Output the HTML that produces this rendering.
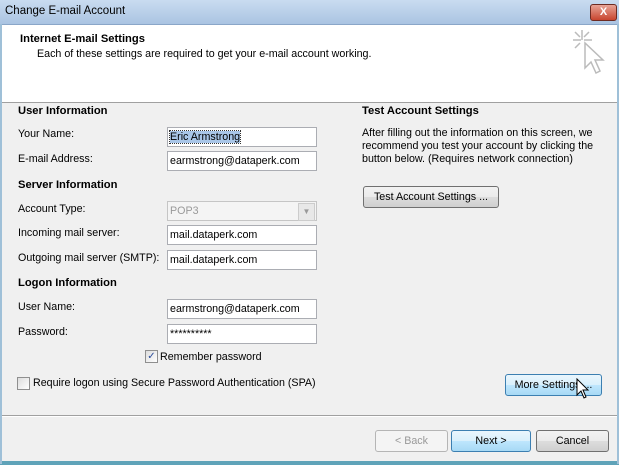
<html><head><style>
body{margin:0;width:619px;height:465px;position:relative;background:#f0f0f0;font-family:"Liberation Sans",sans-serif;font-size:10.7px;color:#000;overflow:hidden}
div,span{position:absolute;white-space:nowrap}
.b{font-weight:bold;font-size:11.2px}
.in{left:167px;width:146px;height:18px;border:1px solid #abadb3;background:#fff;line-height:18px;padding-left:2px;box-sizing:content-box}
.btn{height:20px;border:1px solid #707070;border-radius:3px;background:linear-gradient(#f2f2f2,#ebebeb 50%,#dddddd 51%,#cfcfcf);text-align:center;line-height:20px}
.cb{width:11px;height:11px;border:1px solid #8f8f8f;background:linear-gradient(135deg,#ddd,#fff)}
</style></head><body>
<div style="left:0;top:0;width:619px;height:24px;background:linear-gradient(#c9dcf0,#aac4e2);border-bottom:1px solid #8aa6c8"></div>
<div style="left:5px;top:5px;font-size:11.5px">Change E-mail Account</div>
<div style="left:590px;top:4px;width:25px;height:15px;border:1px solid #6d2b22;border-radius:3px;background:linear-gradient(#e8a496,#c8452f);color:#fff;font-weight:bold;text-align:center;line-height:15px;font-size:11px">X</div>
<div style="left:0;top:25px;width:619px;height:77px;background:#fff;border-bottom:1px solid #a0a0a0"></div>
<div class="b" style="left:20px;top:33px">Internet E-mail Settings</div>
<div style="left:37px;top:48px">Each of these settings are required to get your e-mail account working.</div>
<svg style="position:absolute;left:570px;top:26px" width="40" height="52"><g stroke="#bbb" stroke-width="1.5" fill="none"><path d="M12 4v10M3 14h8M14 14h8M5 6l5 5M19 6l-5 5M5 22l5-5"/><path d="M15 17l0 25 6-6 5 11 4-2-5-11 8 0z" fill="#fff"/></g></svg>
<div class="b" style="left:18px;top:105px">User Information</div>
<div style="left:18px;top:128px">Your Name:</div>
<div class="in" style="top:127px"><span style="position:static;background:#a9c6e8;outline:1px dotted #333">Eric Armstrong</span></div>
<div style="left:18px;top:153px">E-mail Address:</div>
<div class="in" style="top:151px">earmstrong@dataperk.com</div>
<div class="b" style="left:18px;top:179px">Server Information</div>
<div style="left:18px;top:203px">Account Type:</div>
<div class="in" style="top:201px;background:#f4f4f4;color:#999;border-color:#c5c5c5">POP3<span style="right:1px;top:1px;width:15px;height:16px;background:#e8e8e8;border:1px solid #ccc;color:#999;text-align:center;line-height:16px;font-size:8px">▼</span></div>
<div style="left:18px;top:227px">Incoming mail server:</div>
<div class="in" style="top:225px">mail.dataperk.com</div>
<div style="left:18px;top:252px">Outgoing mail server (SMTP):</div>
<div class="in" style="top:250px">mail.dataperk.com</div>
<div class="b" style="left:18px;top:277px">Logon Information</div>
<div style="left:18px;top:301px">User Name:</div>
<div class="in" style="top:299px">earmstrong@dataperk.com</div>
<div style="left:18px;top:326px">Password:</div>
<div class="in" style="top:324px">**********</div>
<div class="cb" style="left:145px;top:350px;color:#2a4b9b;font-size:10px;line-height:11px;text-align:center">✓</div>
<div style="left:160px;top:351px">Remember password</div>
<div class="cb" style="left:17px;top:377px"></div>
<div style="left:33px;top:377px">Require logon using Secure Password Authentication (SPA)</div>
<div class="b" style="left:362px;top:105px">Test Account Settings</div>
<div style="left:362px;top:127px;line-height:13px;white-space:normal;width:250px">After filling out the information on this screen, we recommend you test your account by clicking the button below. (Requires network connection)</div>
<div class="btn" style="left:363px;top:186px;width:134px">Test Account Settings ...</div>
<div class="btn" style="left:505px;top:374px;width:95px;border-color:#3c7fb1;background:linear-gradient(#eaf6fd,#d9f0fc 50%,#bee6fd 51%,#a7d9f5)">More Settings ...</div>
<svg style="position:absolute;left:576px;top:378px" width="14" height="22"><path d="M1 1v16l4-4 3 7 2-1-3-7h5z" fill="#fff" stroke="#000"/></svg>
<div style="left:0;top:415px;width:619px;height:1px;background:#a0a0a0;border-bottom:1px solid #fff"></div>
<div class="btn" style="left:375px;top:430px;width:71px;color:#999;border-color:#b5b5b5;background:#f4f4f4">&lt; Back</div>
<div class="btn" style="left:451px;top:430px;width:78px;border-color:#3c7fb1;background:linear-gradient(#eaf6fd,#d9f0fc 50%,#bee6fd 51%,#a7d9f5)">Next &gt;</div>
<div class="btn" style="left:536px;top:430px;width:71px">Cancel</div>
<div style="left:0;top:461px;width:619px;height:4px;background:#5fa3b9"></div>
<div style="left:0;top:24px;width:2px;height:440px;background:#9fc0d8"></div>
<div style="left:617px;top:24px;width:2px;height:440px;background:#9fc0d8"></div>
</body></html>
